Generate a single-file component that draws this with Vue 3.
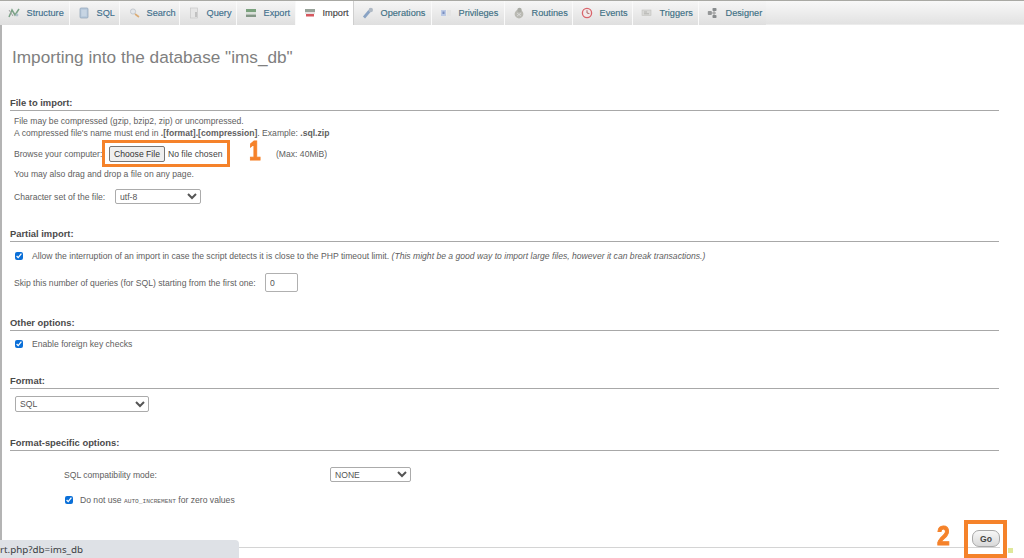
<script setup>
const tabs = [
  { name: 'Structure', w: 70, ic: 'structure' },
  { name: 'SQL', w: 50, ic: 'sql' },
  { name: 'Search', w: 60, ic: 'search' },
  { name: 'Query', w: 57, ic: 'query' },
  { name: 'Export', w: 59, ic: 'export' },
  { name: 'Import', w: 58, ic: 'import', active: true },
  { name: 'Operations', w: 78, ic: 'ops' },
  { name: 'Privileges', w: 73, ic: 'priv' },
  { name: 'Routines', w: 68, ic: 'routines' },
  { name: 'Events', w: 60, ic: 'events' },
  { name: 'Triggers', w: 66, ic: 'triggers' },
  { name: 'Designer', w: 67, ic: 'designer' }
]
</script>

<template>
  <div class="page">
    <nav class="tabs">
      <a v-for="t in tabs" :key="t.name" class="tab" :class="{ active: t.active }" :style="{ width: t.w + 'px' }">
        <svg class="ic" viewBox="0 0 12 12" width="12" height="12">
          <g v-if="t.ic === 'structure'"><path d="M1 10 L4 3 L7 8 L11 2" fill="none" stroke="#6f9a7c" stroke-width="1.5"/><path d="M1 3 L5 9" stroke="#9a9a9a" stroke-width="1"/><circle cx="9" cy="8" r="1.4" fill="#a9bcc9"/></g>
          <g v-else-if="t.ic === 'sql'"><rect x="2" y="1" width="8" height="10" rx="1" fill="#b5c8dc" stroke="#8299b0" stroke-width=".7"/><path d="M3.5 4h5M3.5 6h5M3.5 8h5" stroke="#dfe8f1" stroke-width=".7"/></g>
          <g v-else-if="t.ic === 'search'"><circle cx="5" cy="4.5" r="2.6" fill="#e3e6ea" stroke="#b6bcc4" stroke-width=".8"/><path d="M7 7 L11 10" stroke="#d9a66b" stroke-width="1.6"/></g>
          <g v-else-if="t.ic === 'query'"><rect x="2.5" y="1" width="7" height="10" fill="#e6e6e6" stroke="#c4c4c4" stroke-width=".7"/><path d="M7 5h2v5H7z" fill="#bdbdbd"/></g>
          <g v-else-if="t.ic === 'export'"><rect x="1" y="2" width="10" height="3" fill="#6f9a72"/><rect x="1" y="5" width="10" height="2" fill="#d9dfd9"/><rect x="1" y="7.5" width="10" height="2.5" fill="#7a8f7d"/></g>
          <g v-else-if="t.ic === 'import'"><rect x="1" y="2" width="10" height="3" fill="#8d9a8f"/><rect x="1" y="5" width="10" height="2" fill="#e5e0e0"/><rect x="2" y="7" width="8" height="2.5" fill="#d2474e"/></g>
          <g v-else-if="t.ic === 'ops'"><path d="M2 10.5 L7.5 4" stroke="#7f9cc0" stroke-width="2.8"/><circle cx="8.8" cy="3" r="2.2" fill="#a9b4c0"/></g>
          <g v-else-if="t.ic === 'priv'"><rect x="1" y="3" width="5" height="6" fill="#b7c6e4"/><rect x="2.5" y="4.5" width="2" height="2.5" fill="#6f86bd"/><rect x="7" y="3" width="4" height="6" fill="#e4e4e4"/></g>
          <g v-else-if="t.ic === 'routines'"><circle cx="6" cy="7" r="4.4" fill="#b5b5ae"/><circle cx="6.5" cy="3" r="2.2" fill="#a3a59e"/><path d="M4 6l4 3M4 9l4-3" stroke="#e2e2e2" stroke-width=".7"/></g>
          <g v-else-if="t.ic === 'events'"><circle cx="6" cy="6" r="4.6" fill="#f3e9e9" stroke="#d8565e" stroke-width="1.3"/><path d="M6 3.2V6L8.4 6.6" fill="none" stroke="#9d4a4a" stroke-width=".9"/></g>
          <g v-else-if="t.ic === 'triggers'"><rect x="1" y="3" width="9" height="5.5" fill="#d7d7d4" stroke="#bdbdb9" stroke-width=".6"/><path d="M3 5h3M3 6.8h5" stroke="#9c9c98" stroke-width=".7"/></g>
          <g v-else><path d="M4 6h5M7 2.5v7" stroke="#8e8e8e" stroke-width="1"/><rect x=".8" y="4" width="4" height="4" rx=".8" fill="#8c8f90"/><rect x="5.5" y="1" width="4" height="3" rx=".8" fill="#7e8284"/><rect x="5.5" y="8" width="4" height="3" rx=".8" fill="#7e8284"/></g>
        </svg>
        <span>{{ t.name }}</span>
      </a>
    </nav>

    <main class="main">
      <h2 class="title">Importing into the database "ims_db"</h2>

      <section class="sec s1">
        <h3>File to import:</h3>
        <p class="tight first">File may be compressed (gzip, bzip2, zip) or uncompressed.</p>
        <p class="tight">A compressed file's name must end in <b>.[format].[compression]</b>. Example: <b>.sql.zip</b></p>
        <div class="browse">
          <span class="browse-label">Browse your computer:</span>
          <button class="choose" type="button">Choose File</button>
          <span class="nofile">No file chosen</span>
          <span class="max">(Max: 40MiB)</span>
        </div>
        <p class="drag">You may also drag and drop a file on any page.</p>
        <div class="charset">
          <span>Character set of the file:</span>
          <select class="sel cs"><option>utf-8</option></select>
        </div>
      </section>

      <section class="sec s2">
        <h3>Partial import:</h3>
        <label class="chk c1">
          <input type="checkbox" checked>
          <span>Allow the interruption of an import in case the script detects it is close to the PHP timeout limit. <i>(This might be a good way to import large files, however it can break transactions.)</i></span>
        </label>
        <div class="skip">
          <span>Skip this number of queries (for SQL) starting from the first one:</span>
          <input class="num" type="text" value="0">
        </div>
      </section>

      <section class="sec s3">
        <h3>Other options:</h3>
        <label class="chk c2"><input type="checkbox" checked><span>Enable foreign key checks</span></label>
      </section>

      <section class="sec s4">
        <h3>Format:</h3>
        <select class="sel fmt"><option>SQL</option></select>
      </section>

      <section class="sec s5">
        <h3>Format-specific options:</h3>
        <div class="compat">
          <span class="compat-label">SQL compatibility mode:</span>
          <select class="sel none"><option>NONE</option></select>
        </div>
        <label class="chk c3"><input type="checkbox" checked><span>Do not use <code>AUTO_INCREMENT</code> for zero values</span></label>
      </section>
    </main>

    <div class="footer-line"></div>
    <button class="go" type="button">Go</button>

    <div class="status">rt.php?db=ims_db</div>
    <div class="mark box1"></div>
    <div class="digit d1">1</div>
    <div class="mark box2"></div>
    <div class="digit d2">2</div>
    <div class="corner"></div>
  </div>
</template>

<style>
html, body { margin: 0; padding: 0; background: #fff; overflow: hidden; }
</style>

<style scoped>
.page {
  position: relative;
  width: 1024px;
  height: 558px;
  overflow: hidden;
  background: #fff;
  font-family: "Liberation Sans", Arial, sans-serif;
  font-size: 8.6px;
  color: #606060;
  box-sizing: border-box;
  border-top: 1px solid #a9a9a4;
}
.tabs {
  display: flex;
  height: 24px;
  background: linear-gradient(#f8f8f8, #e2e2e2);
  border-bottom: 1px solid #ececec;
  box-sizing: border-box;
}
.tab {
  display: flex;
  align-items: center;
  gap: 6.5px;
  padding-left: 8px;
  box-sizing: border-box;
  height: 24px;
  border-right: 1px solid #fafafa;
  font-size: 9.2px;
  font-weight: 400;
  color: #3f6f8c;
  -webkit-text-stroke: 0.15px #3f6f8c;
  white-space: nowrap;
  background: linear-gradient(#f6f6f6, #dfdfdf);
}
.tab:nth-child(n+7) { color: #3d7080; }
.tab.active {
  background: #fff;
  color: #444;
  -webkit-text-stroke: 0.15px #444;
  border-right: 1px solid #cfcfcf;
}
.tab:last-child { border-right: 0; }
.ic { flex: none; filter: blur(0.3px); opacity: .9; }
.main {
  border-left: 2px solid #b4b4b4;
  height: 533px;
  box-sizing: border-box;
  padding: 0 25px 0 8px;
}
.title {
  margin: 0;
  padding: 21px 0 0 2px;
  height: 49px;
  box-sizing: content-box;
  font-size: 17.2px;
  line-height: 22px;
  font-weight: 400;
  color: #808080;
  white-space: nowrap;
}
.sec h3 {
  margin: 0;
  font-size: 9.4px;
  line-height: 14px;
  height: 14px;
  font-weight: 700;
  color: #4a4a4a;
  border-bottom: 1px solid #a8a8a8;
}
.s1 { height: 131px; margin-top: 1px; }
.s2 { height: 89px; }
.s3 { height: 58px; }
.s4 { height: 62px; }
.sec p { margin: 0; padding-left: 4px; }
.tight { line-height: 12px; }
.first { margin-top: 4px !important; }
.browse {
  display: flex;
  align-items: center;
  height: 21px;
  margin-top: 4px;
  padding-left: 4px;
}
.browse-label { width: 95px; flex: none; }
.choose {
  width: 56px;
  height: 16px;
  padding: 0;
  background: #efefef;
  border: 1px solid #767676;
  border-radius: 2px;
  font: 8.6px "Liberation Sans", Arial, sans-serif;
  color: #333;
}
.nofile { margin-left: 3px; color: #444; width: 95px; flex: none; }
.max { margin-left: 13px; }
.drag { margin-top: 5px !important; line-height: 11px; }
.charset {
  display: flex;
  align-items: center;
  margin-top: 9px;
  padding-left: 4px;
  height: 15px;
}
.charset span { width: 101px; flex: none; }
.sel {
  box-sizing: border-box;
  font: 8.6px "Liberation Sans", Arial, sans-serif;
  color: #555;
  background: #fff;
  border: 1px solid #ababab;
  border-radius: 2px;
}
.cs { width: 86px; height: 15px; }
.chk { display: flex; align-items: center; white-space: nowrap; }
.chk input {
  width: 8px;
  height: 8px;
  margin: 0;
  flex: none;
  accent-color: #0a6fd8;
}
.chk i { font-style: italic; }
.c1 { margin: 8px 0 0 5px; gap: 9px; height: 11px; }
.skip {
  display: flex;
  align-items: center;
  margin-top: 12px;
  padding-left: 4px;
  height: 19px;
}
.skip span { width: 251px; flex: none; }
.num {
  box-sizing: border-box;
  width: 33px;
  height: 19px;
  padding: 0 4px;
  border: 1px solid #b0b0b0;
  border-radius: 2px;
  font: 8.6px "Liberation Sans", Arial, sans-serif;
  color: #555;
}
.c2 { margin: 7px 0 0 5px; gap: 9px; height: 11px; }
.fmt { display: block; width: 134px; height: 16px; margin: 7px 0 0 5px; }
.compat {
  display: flex;
  align-items: center;
  margin-top: 16px;
  padding-left: 54px;
  height: 15px;
}
.compat-label { width: 266px; flex: none; }
.none { width: 81px; height: 15px; }
.c3 { margin: 12px 0 0 55px; gap: 7px; height: 11px; }
code { font-family: "Liberation Mono", monospace; font-size: 6.2px; }
.footer-line {
  position: absolute;
  left: 239px;
  right: 24px;
  top: 546px;
  height: 1px;
  background: #d4d4d4;
}
.go {
  position: absolute;
  left: 972px;
  top: 529px;
  width: 28px;
  height: 17px;
  padding: 0;
  border: 1px solid #a8a8a8;
  border-radius: 7px;
  background: linear-gradient(#f7f7f7, #d9d9d9);
  font: 700 8.6px "Liberation Sans", Arial, sans-serif;
  color: #444;
}
.status {
  position: absolute;
  left: 0;
  top: 539px;
  width: 239px;
  height: 18px;
  padding-top: 3px;
  box-sizing: border-box;
  background: #dee1e6;
  border-top-right-radius: 4px;
  font: 9.8px "Noto Sans", "Open Sans", sans-serif;
  line-height: 14px;
  color: #3c4043;
}
.mark { position: absolute; box-sizing: border-box; border: 3px solid #f5822a; }
.box1 { left: 102px; top: 139px; width: 128px; height: 27px; }
.box2 { left: 964px; top: 519px; width: 43px; height: 38px; border-width: 4px; }
.digit {
  position: absolute;
  font-family: "Liberation Sans", Arial, sans-serif;
  font-weight: 700;
  color: #f5822a;
  -webkit-text-stroke: 1px #f5822a;
  line-height: 1;
  transform-origin: left top;
}
.d1 { left: 249px; top: 136px; font-size: 28px; transform: scaleX(.75); }
.d2 { left: 937px; top: 522px; font-size: 27px; transform: scaleX(.85); }
.corner {
  position: absolute;
  left: 1008px;
  top: 547px;
  width: 5px;
  height: 5px;
  background: #dfe89a;
}
</style>
